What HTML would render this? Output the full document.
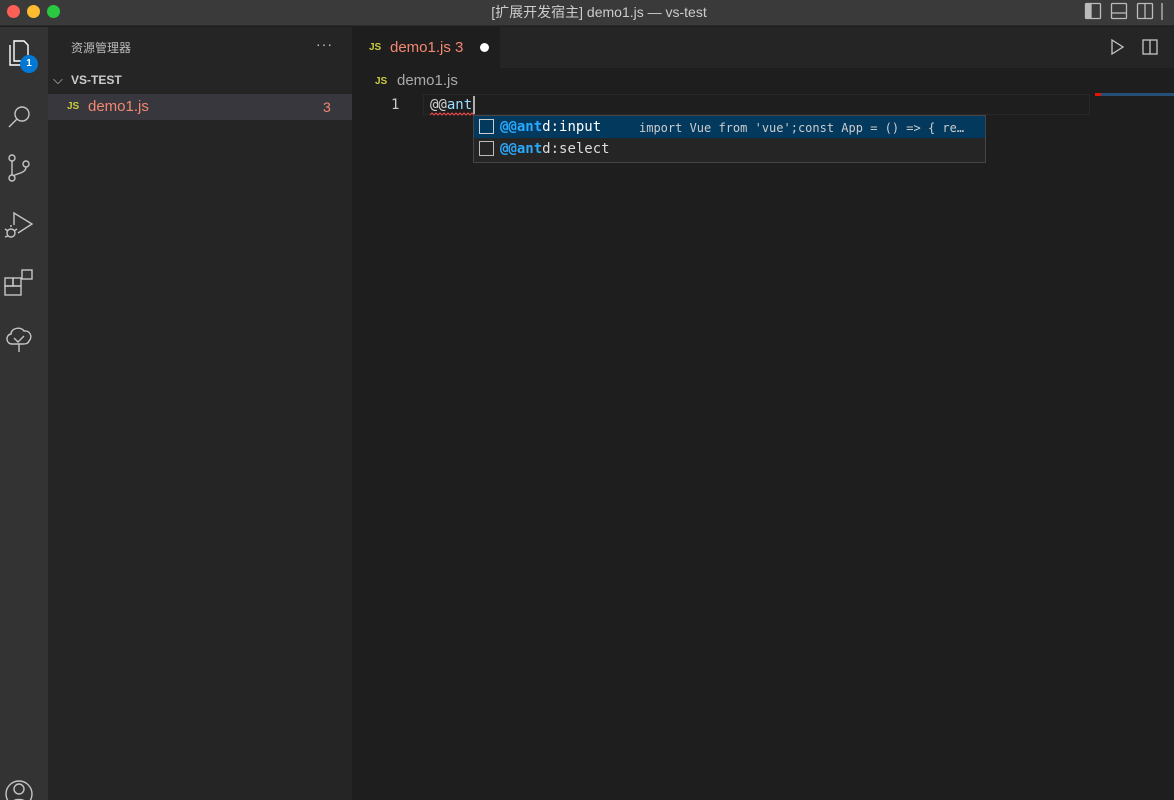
<!DOCTYPE html>
<html><head><meta charset="utf-8"><style>
*{margin:0;padding:0;box-sizing:border-box}
body{width:1174px;height:800px;background:#1e1e1e;font-family:"Liberation Sans","Noto Sans CJK SC",sans-serif;position:relative;overflow:hidden}
.abs{position:absolute}
.mono{font-family:"DejaVu Sans Mono","Liberation Mono",monospace}
</style></head><body>
<div class="abs" style="left:0;top:0;width:1174px;height:26px;background:#3a3a3a;border-bottom:1px solid #2a2a2a"></div>
<div class="abs" style="left:7px;top:5px;width:13px;height:13px;border-radius:50%;background:#fe5f57"></div>
<div class="abs" style="left:27px;top:5px;width:13px;height:13px;border-radius:50%;background:#febc2e"></div>
<div class="abs" style="left:47px;top:5px;width:13px;height:13px;border-radius:50%;background:#28c840"></div>
<div class="abs" style="left:12px;top:2px;width:1174px;text-align:center;color:#ccc;font-size:14px">[扩展开发宿主] demo1.js — vs-test</div>
<svg class="abs" style="left:1084px;top:2px" width="80" height="20" fill="none" stroke="#bbb" stroke-width="1.3">
<rect x="1.5" y="1.5" width="15" height="15" rx="1"/><rect x="2" y="2" width="5" height="14" fill="#bbb"/>
<rect x="27.5" y="1.5" width="15" height="15" rx="1"/><line x1="28" y1="11" x2="42" y2="11"/>
<rect x="53.5" y="1.5" width="15" height="15" rx="1"/><line x1="61" y1="2" x2="61" y2="16"/>
<line x1="78" y1="1" x2="78" y2="18"/></svg>
<div class="abs" style="left:0;top:27px;width:48px;height:773px;background:#333"></div>
<svg class="abs" style="left:0;top:27px" width="48" height="773" fill="none" stroke="#c5c5c5" stroke-width="1.4">
<path d="M14 14h10l4 4v16H14z M10 18v20h14" stroke="#fff"/>
<circle cx="22" cy="87" r="7"/><line x1="17" y1="92" x2="9" y2="100"/>
<circle cx="12" cy="131" r="3"/><circle cx="12" cy="151" r="3"/><circle cx="26" cy="137" r="3"/><path d="M12 134v14M26 140c0 6-8 6-13 9"/>
<path d="M14 198v-12l18 11-14 9"/><circle cx="11" cy="206" r="4"/><path d="M5 202l3 2M5 210l3-1M17 202l-3 2M11 200v-2"/>
<rect x="5" y="251" width="8" height="8"/><rect x="13" y="251" width="8" height="8"/><rect x="5" y="259" width="16" height="9"/><rect x="22" y="243" width="10" height="9"/>
<path d="M19 325v-8M12 317c-6 0-7-9-1-10 0-6 10-8 13-3 6-1 9 6 5 10-1 3-4 3-6 3zM14 311l4 4 6-6"/>
<circle cx="19" cy="767" r="13"/><circle cx="19" cy="762" r="5"/><path d="M10 777c3-6 15-6 18 0"/>
</svg>
<div class="abs" style="left:20px;top:55px;width:18px;height:18px;border-radius:50%;background:#0078d4;color:#fff;font-size:10px;font-weight:bold;text-align:center;line-height:18px">1</div>
<div class="abs" style="left:48px;top:27px;width:304px;height:773px;background:#252526"></div>
<div class="abs" style="left:71px;top:39px;color:#bbb;font-size:12px">资源管理器</div>
<div class="abs" style="left:316px;top:36px;color:#ccc;font-size:14px;letter-spacing:1px">···</div>
<div class="abs" style="left:53px;top:72px;color:#ccc;font-size:13px">⌵</div>
<div class="abs" style="left:71px;top:73px;color:#ccc;font-size:12px;font-weight:bold">VS-TEST</div>
<div class="abs" style="left:48px;top:94px;width:304px;height:26px;background:#37373d"></div>
<div class="abs" style="left:67px;top:101px;color:#cbcb41;font-size:10px;font-weight:bold">JS</div>
<div class="abs" style="left:88px;top:98px;color:#f48771;font-size:15px">demo1.js</div>
<div class="abs" style="left:323px;top:99px;color:#f48771;font-size:14px">3</div>
<div class="abs" style="left:352px;top:27px;width:822px;height:41px;background:#252526"></div>
<div class="abs" style="left:352px;top:27px;width:148px;height:41px;background:#1e1e1e"></div>
<div class="abs" style="left:369px;top:42px;color:#cbcb41;font-size:10px;font-weight:bold">JS</div>
<div class="abs" style="left:390px;top:39px;color:#f48771;font-size:15px">demo1.js 3</div>
<div class="abs" style="left:480px;top:43px;width:9px;height:9px;border-radius:50%;background:#fff"></div>
<svg class="abs" style="left:1108px;top:37px" width="66" height="20" fill="none" stroke="#c5c5c5" stroke-width="1.3">
<path d="M4 3l11 7-11 7z"/><rect x="35" y="3" width="14" height="14"/><line x1="42" y1="3" x2="42" y2="17"/></svg>
<div class="abs" style="left:375px;top:76px;color:#cbcb41;font-size:10px;font-weight:bold">JS</div>
<div class="abs" style="left:397px;top:72px;color:#aaa;font-size:15px">demo1.js</div>
<div class="abs" style="left:423px;top:94px;width:667px;height:21px;border:1px solid #282828"></div>
<div class="abs" style="left:1095px;top:93px;width:79px;height:3px;background:#264f78"></div>
<div class="abs" style="left:1095px;top:93px;width:6px;height:3px;background:#e51400"></div>
<div class="abs mono" style="left:391px;top:97px;color:#ccc;font-size:14px">1</div>
<div class="abs mono" style="left:430px;top:97px;color:#d4d4d4;font-size:14px">@@<span style="color:#9cdcfe">ant</span></div>
<div class="abs" style="left:473px;top:96px;width:2px;height:18px;background:#aeafad"></div>
<svg class="abs" style="left:430px;top:112px" width="45" height="4"><path d="M0 3l2-2 2 2 2-2 2 2 2-2 2 2 2-2 2 2 2-2 2 2 2-2 2 2 2-2 2 2 2-2 2 2 2-2 2 2 2-2 2 2 2-2 2 2" fill="none" stroke="#f14c4c" stroke-width="1"/></svg>
<div class="abs" style="left:473px;top:115px;width:513px;height:48px;background:#252526;border:1px solid #454545"></div>
<div class="abs" style="left:474px;top:116px;width:511px;height:22px;background:#04395e"></div>
<div class="abs" style="left:479px;top:119px;width:15px;height:15px;border:1px solid #ccc"></div>
<div class="abs" style="left:479px;top:141px;width:15px;height:15px;border:1px solid #bbb"></div>
<div class="abs mono" style="left:500px;top:119px;color:#fff;font-size:14px"><span style="color:#2aaaff;font-weight:bold">@@ant</span>d:input</div>
<div class="abs mono" style="left:639px;top:121px;color:#ccc;font-size:12px">import Vue from 'vue';const App = () =&gt; { re…</div>
<div class="abs mono" style="left:500px;top:141px;color:#ddd;font-size:14px"><span style="color:#2aaaff;font-weight:bold">@@ant</span>d:select</div>
</body></html>
